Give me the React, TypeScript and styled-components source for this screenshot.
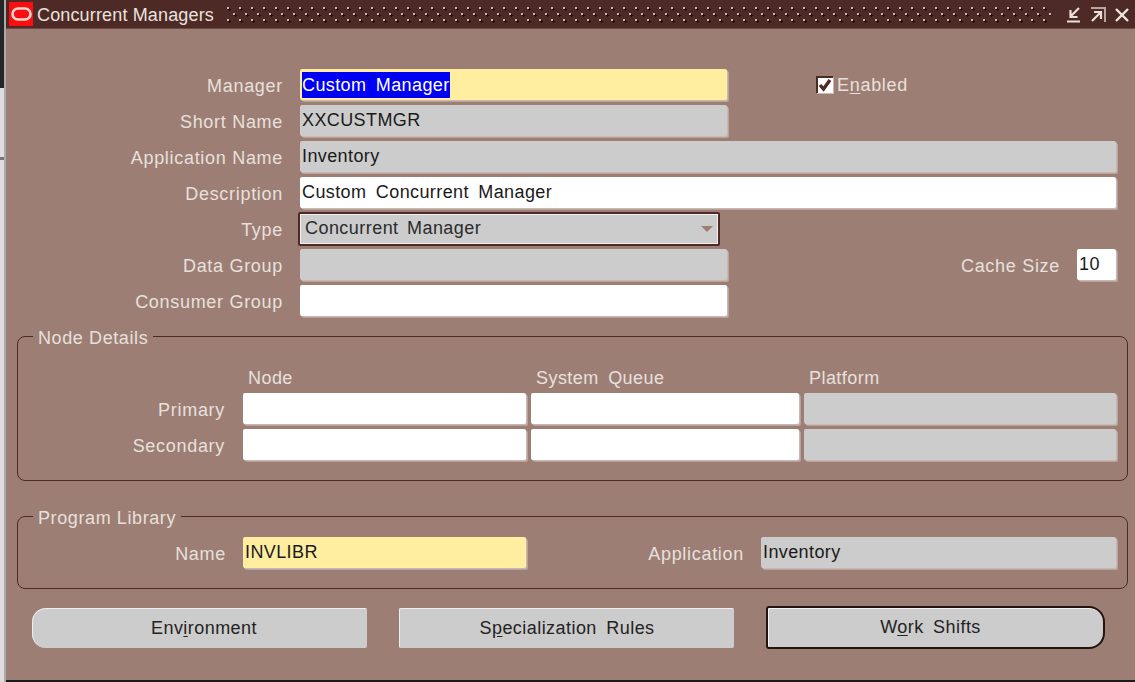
import styled, { createGlobalStyle } from 'styled-components';

const Global = createGlobalStyle`
    html, body {
        margin: 0;
        padding: 0;
        background: #d4d4d4;
    }
    * {
        box-sizing: border-box;
    }
`;

const Page = styled.div`
    display: flex;
    width: 1135px;
    height: 682px;
    overflow: hidden;
    font-family: "Liberation Sans", Arial, sans-serif;
    font-size: 18px;
`;

const LeftStrip = styled.div`
    width: 6px;
    border-right: 2px solid #aaaaaa;
    background: linear-gradient(to bottom, #262626 0, #262626 88px, #dedcdc 88px, #dedcdc 157px, #777 157px, #777 160px, #dedcdc 160px);
`;

const Window = styled.div`
    flex: 1;
    display: flex;
    flex-direction: column;
    background: #9c7e75;
    border-bottom: 2px solid #1c1c1c;
`;

const TitleBar = styled.div`
    height: 29px;
    display: flex;
    align-items: center;
    padding: 0 2px 0 3px;
    background: #4d2a25;
    color: #eae2de;
    border-bottom: 1px solid #6d4a44;
`;

const Logo = styled.div`
    width: 24px;
    height: 24px;
    background: #fb0d12;
    display: flex;
    align-items: center;
    justify-content: center;
    margin-right: 4px;
`;

const Title = styled.span`
    font-size: 18px;
    letter-spacing: 0.15px;
    padding-top: 3px;
`;

const Grip = styled.div`
    width: 824px;
    height: 16px;
    margin: 1px 0 0 13px;
    background-image:
        radial-gradient(circle at 1px 1px, #cdb9b3 0, #cdb9b3 1px, transparent 1.4px),
        radial-gradient(circle at 1px 1px, #cdb9b3 0, #cdb9b3 1px, transparent 1.4px),
        radial-gradient(circle at 2.5px 2.5px, #1d0f0d 0, #1d0f0d 1px, transparent 1.4px),
        radial-gradient(circle at 2.5px 2.5px, #1d0f0d 0, #1d0f0d 1px, transparent 1.4px);
    background-size: 12px 12px;
    background-position: 0 0, 6px 6px, 0 0, 6px 6px;
`;

const TitleIcons = styled.div`
    margin-left: auto;
    display: flex;
    gap: 8px;
    align-items: center;
    padding: 1px 3px 0 0;
`;

const Form = styled.div`
    display: flex;
    flex-direction: column;
    gap: 5px;
    padding: 40px 19px 0 0;
`;

const Row = styled.div`
    display: flex;
    align-items: center;
    height: 31px;
`;

const Label = styled.label<{ $width?: number }>`
    width: ${(p) => p.$width ?? 277}px;
    text-align: right;
    color: #e8e0dc;
    letter-spacing: 0.7px;
    padding-top: 4px;
    flex: none;
`;

const Field = styled.div<{ $kind?: 'req' | 'ro' | 'plain'; $width?: number }>`
    height: 31px;
    flex: ${(p) => (p.$width ? 'none' : '1')};
    width: ${(p) => (p.$width ? `${p.$width}px` : 'auto')};
    border-radius: 2px;
    padding: 0 2px;
    display: flex;
    align-items: center;
    color: #1a1a1a;
    letter-spacing: 0.4px;
    word-spacing: 4px;
    white-space: nowrap;
    background: ${(p) => (p.$kind === 'req' ? '#ffeda0' : p.$kind === 'ro' ? '#cccccc' : '#ffffff')};
    box-shadow: 1px 1px 0 #c9b8b2, 2px 2px 0 #b7a39c;
`;

const Selected = styled.span`
    background: #0000f5;
    color: #ffffff;
    line-height: 26px;
`;

const LabelGap = styled.div`
    width: 17px;
    flex: none;
`;

const EnabledBox = styled.div`
    margin-left: 89px;
    display: flex;
    align-items: center;
    gap: 4px;
    color: #e8e0dc;
    letter-spacing: 0.7px;
`;

const Check = styled.div`
    width: 17px;
    height: 17px;
    background: #ffffff;
    border-top: 2px solid #4d2a25;
    border-left: 2px solid #4d2a25;
    box-shadow: 1px 1px 0 #c9b8b2;
    display: flex;
`;

const EnabledText = styled.span`
    padding-top: 2px;
`;

const Mnemonic = styled.span`
    text-decoration: underline;
    text-underline-offset: 2px;
`;

const Select = styled.div`
    width: 422px;
    height: 34px;
    margin-left: -2px;
    border: 2px solid #4d2a25;
    background: #cccccc;
    box-shadow: inset 1px 1px 0 #f0f0f0, inset -1px -1px 0 #eeeeee;
    display: flex;
    align-items: center;
    justify-content: space-between;
    padding: 0 5px;
    color: #2b2b2b;
    letter-spacing: 0.45px;
    word-spacing: 3px;
    border-radius: 2px;
`;

const Arrow = styled.div`
    width: 0;
    height: 0;
    border-left: 6px solid transparent;
    border-right: 6px solid transparent;
    border-top: 6px solid #9c7e75;
`;

const Spacer = styled.div`
    flex: 1;
`;

const Group = styled.fieldset<{ $height: number; $top: number }>`
    margin: ${(p) => p.$top}px 7px 0 11px;
    height: ${(p) => p.$height}px;
    border: 1.5px solid #4d2a25;
    border-radius: 8px;
    padding: 0;
`;

const Legend = styled.legend`
    position: relative;
    top: 2px;
    margin-left: 15px;
    padding: 0 5px;
    color: #e8e0dc;
    letter-spacing: 0.6px;
    line-height: 20px;
`;

const NodeHeader = styled.div`
    display: grid;
    grid-template-columns: 230px 288px 273px auto;
    margin-top: 20px;
    height: 22px;
`;

const HeadCell = styled.div`
    color: #e8e0dc;
    letter-spacing: 0.45px;
    word-spacing: 4px;
    height: 24px;
    line-height: 24px;
`;

const NodeGrid = styled.div`
    display: grid;
    grid-template-columns: 220px 283px 268px 312px;
    grid-auto-rows: 36px;
    column-gap: 5px;
    margin-top: 5px;
`;

const RowLabel = styled.div`
    text-align: right;
    color: #e8e0dc;
    letter-spacing: 0.7px;
    line-height: 31px;
    padding: 2px 13px 0 0;
`;

const LibraryRow = styled.div`
    display: flex;
    align-items: center;
    margin-top: 11px;
`;

const Buttons = styled.div`
    display: flex;
    align-items: center;
    margin: 17px 0 0 26px;
    gap: 32px;
`;

const ActionButton = styled.div<{ $shape?: 'left' | 'right' }>`
    width: ${(p) => (p.$shape === 'right' ? 339 : 335)}px;
    height: ${(p) => (p.$shape === 'right' ? 43 : 40)}px;
    background: #cccccc;
    display: flex;
    align-items: center;
    justify-content: center;
    color: #232323;
    letter-spacing: 0.45px;
    word-spacing: 4px;
    border-top: 1px solid #efefef;
    border-left: 1px solid #efefef;
    border-radius: ${(p) => (p.$shape === 'left' ? '14px 2px 2px 14px' : '2px')};
    padding-left: ${(p) => (p.$shape === 'left' ? 8 : 0)}px;
    ${(p) =>
        p.$shape === 'right' &&
        `
        border: 2px solid #241311;
        border-radius: 3px 16px 16px 3px;
        box-shadow: inset 1px 1px 0 #f4f4f4;
        padding-right: 10px;
    `}
`;

const OracleLogo = () => (
    <svg width="21" height="14" viewBox="0 0 21 14">
        <rect x="1.5" y="1.5" width="18" height="11" rx="5.5" fill="none" stroke="#ffd9d0" strokeWidth="2.6" />
    </svg>
);

const MinimizeIcon = () => (
    <svg width="16" height="16" viewBox="0 0 16 16">
        <path d="M13 1 L5 9 M4.5 3 V10 H11.5" fill="none" stroke="#e8e0dc" strokeWidth="2.2" />
        <path d="M1 14.5 H14" stroke="#e8e0dc" strokeWidth="2" />
    </svg>
);

const MaximizeIcon = () => (
    <svg width="16" height="16" viewBox="0 0 16 16">
        <path d="M1 1 H15 V15" fill="none" stroke="#b8a6a0" strokeWidth="2" />
        <path d="M2 14 L10 6 M4 5 H11 V12" fill="none" stroke="#e8e0dc" strokeWidth="2.2" />
    </svg>
);

const CloseIcon = () => (
    <svg width="16" height="16" viewBox="0 0 16 16">
        <path d="M2 2 L14 14 M14 2 L2 14" stroke="#eee6e2" strokeWidth="2.4" />
    </svg>
);

const CheckMark = () => (
    <svg width="15" height="15" viewBox="0 0 15 15">
        <path d="M2 7 L5.5 11 L12 2" fill="none" stroke="#4d2a25" strokeWidth="3.4" />
    </svg>
);

const App = () => {
    return (
        <Page>
            <Global />
            <LeftStrip />
            <Window>
                <TitleBar>
                    <Logo>
                        <OracleLogo />
                    </Logo>
                    <Title>Concurrent Managers</Title>
                    <Grip />
                    <TitleIcons>
                        <MinimizeIcon />
                        <MaximizeIcon />
                        <CloseIcon />
                    </TitleIcons>
                </TitleBar>

                <Form>
                    <Row>
                        <Label>Manager</Label>
                        <LabelGap />
                        <Field $kind="req" $width={427}>
                            <Selected>Custom Manager</Selected>
                        </Field>
                        <EnabledBox>
                            <Check>
                                <CheckMark />
                            </Check>
                            <EnabledText>
                                E<Mnemonic>n</Mnemonic>abled
                            </EnabledText>
                        </EnabledBox>
                    </Row>
                    <Row>
                        <Label>Short Name</Label>
                        <LabelGap />
                        <Field $kind="ro" $width={427}>XXCUSTMGR</Field>
                    </Row>
                    <Row>
                        <Label>Application Name</Label>
                        <LabelGap />
                        <Field $kind="ro">Inventory</Field>
                    </Row>
                    <Row>
                        <Label>Description</Label>
                        <LabelGap />
                        <Field>Custom Concurrent Manager</Field>
                    </Row>
                    <Row>
                        <Label>Type</Label>
                        <LabelGap />
                        <Select>
                            Concurrent Manager
                            <Arrow />
                        </Select>
                    </Row>
                    <Row>
                        <Label>Data Group</Label>
                        <LabelGap />
                        <Field $kind="ro" $width={427} />
                        <Spacer />
                        <Label $width={200}>Cache Size</Label>
                        <LabelGap />
                        <Field $width={39}>10</Field>
                    </Row>
                    <Row>
                        <Label>Consumer Group</Label>
                        <LabelGap />
                        <Field $width={427} />
                    </Row>
                </Form>

                <Group $height={155} $top={10}>
                    <Legend>Node Details</Legend>
                    <NodeHeader>
                        <span />
                        <HeadCell>Node</HeadCell>
                        <HeadCell>System Queue</HeadCell>
                        <HeadCell>Platform</HeadCell>
                    </NodeHeader>
                    <NodeGrid>
                        <RowLabel>Primary</RowLabel>
                        <Field />
                        <Field />
                        <Field $kind="ro" />
                        <RowLabel>Secondary</RowLabel>
                        <Field />
                        <Field />
                        <Field $kind="ro" />
                    </NodeGrid>
                </Group>

                <Group $height={83} $top={25}>
                    <Legend>Program Library</Legend>
                    <LibraryRow>
                        <Label $width={208}>Name</Label>
                        <LabelGap />
                        <Field $kind="req" $width={283}>INVLIBR</Field>
                        <Label $width={218}>Application</Label>
                        <LabelGap />
                        <Field $kind="ro" $width={355}>Inventory</Field>
                    </LibraryRow>
                </Group>

                <Buttons>
                    <ActionButton $shape="left">
                        <span>
                            Env<Mnemonic>i</Mnemonic>ronment
                        </span>
                    </ActionButton>
                    <ActionButton>
                        <span>
                            S<Mnemonic>p</Mnemonic>ecialization Rules
                        </span>
                    </ActionButton>
                    <ActionButton $shape="right">
                        <span>
                            W<Mnemonic>o</Mnemonic>rk Shifts
                        </span>
                    </ActionButton>
                </Buttons>
            </Window>
        </Page>
    );
};

export default App;
